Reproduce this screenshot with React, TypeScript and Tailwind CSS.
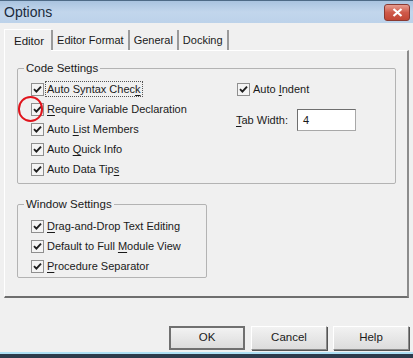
import React from "react";

const font = { fontFamily: '"Liberation Sans", Arial, sans-serif' };

const Check = () => (
  <span className="w-[13px] h-[13px] border border-[#8f8f8f] bg-[#f4f4f4] flex items-center justify-center shrink-0">
    <svg width="9" height="9" viewBox="0 0 9 9">
      <path d="M1 4.2 L3.4 6.6 L8 1.6" stroke="#1f1f1f" strokeWidth="1.9" fill="none" />
    </svg>
  </span>
);

type ItemProps = { children: React.ReactNode; focus?: boolean };

const Item = ({ children, focus }: ItemProps) => (
  <div className="flex items-center gap-[2px] h-[20px]">
    <Check />
    <span className={`px-[1px] leading-[14px] ${focus ? "outline outline-1 outline-dotted outline-[#555]" : ""}`}>{children}</span>
  </div>
);

const U = ({ children }: { children: React.ReactNode }) => <span className="underline underline-offset-2">{children}</span>;

export default function App() {
  return (
    <div style={font} className="w-[413px] h-[358px] bg-[#f0f0f0] flex flex-col overflow-hidden text-[11px] text-[#1a1a1a] relative">
      {/* title bar */}
      <div className="h-[23px] shrink-0 flex items-center justify-between pl-[4px] pr-[3px] bg-gradient-to-b from-[#a9c3df] via-[#c2d6ec] to-[#bcd2ea] border-t border-[#4e6a86]">
        <span className="text-[14px] text-[#1b2b3c]">Options</span>
        <div className="w-[26px] h-[17px] mt-[1px] rounded-[3px] border border-[#8a3a32] bg-gradient-to-b from-[#e69c90] via-[#cf5a4a] to-[#c24634] flex items-center justify-center">
          <svg width="11" height="9" viewBox="0 0 11 9">
            <path d="M1.5 1 L9.5 8 M9.5 1 L1.5 8" stroke="#fff" strokeWidth="2.2" />
          </svg>
        </div>
      </div>

      <div className="flex-1 min-h-0 flex flex-col px-[4px]">
        {/* tabs */}
        <div className="flex items-end h-[27px] shrink-0 text-[11.5px]">
          <div className="h-[22px] pl-[9px] pr-[7px] pt-[3px] bg-[#f0f0f0] border-t border-l border-white relative z-10 -mb-[1px]">Editor</div>
          <div className="h-[20px] px-[4px] pt-[2px] border-l-2 border-r-2 border-[#9a9a9a] text-[11px]">Editor Format</div>
          <div className="h-[20px] px-[4px] pt-[2px] border-r-2 border-[#9a9a9a] text-[11px]">General</div>
          <div className="h-[20px] px-[4px] pt-[2px] border-r-2 border-[#9a9a9a] text-[11px]">Docking</div>
        </div>

        {/* panel */}
        <div className="h-[248px] shrink-0 border-t border-l border-white border-r-2 border-b-2 border-r-[#8c8c8c] border-b-[#6e6e6e] pl-[12px] pr-[11px] pt-[10px] relative">
          <fieldset className="border border-[#b3b3b3] rounded-[2px] h-[123px] flex pl-[13px] pt-[4px]">
            <legend className="text-[11.5px] px-[2px] -ml-[7px] leading-[14px]">Code Settings</legend>
            <div className="w-[206px]">
              <Item focus>Auto Syntax Chec<U>k</U></Item>
              <Item><U>R</U>equire Variable Declaration</Item>
              <Item>Auto <U>L</U>ist Members</Item>
              <Item>Auto <U>Q</U>uick Info</Item>
              <Item>Auto Data Tip<U>s</U></Item>
            </div>
            <div className="flex flex-col">
              <Item>Auto <U>I</U>ndent</Item>
              <div className="flex items-center mt-[10px] -ml-[1px]">
                <span className="w-[61px]"><U>T</U>ab Width:</span>
                <div className="w-[59px] h-[22px] bg-white border border-[#a8a8a8] border-t-[#6f6f6f] border-l-[#6f6f6f] pl-[5px] flex items-center">4</div>
              </div>
            </div>
          </fieldset>

          <fieldset className="border border-[#b3b3b3] rounded-[2px] h-[81px] w-[190px] mt-[13px] pl-[13px] pt-[5px]">
            <legend className="text-[11.5px] px-[2px] -ml-[7px] leading-[14px]">Window Settings</legend>
            <Item><U>D</U>rag-and-Drop Text Editing</Item>
            <Item>Default to Full <U>M</U>odule View</Item>
            <Item><U>P</U>rocedure Separator</Item>
          </fieldset>

          {/* annotation */}
          <div className="absolute left-[13px] top-[45px] w-[25px] h-[26px] rounded-full border-2 border-[#e0141c]" />
        </div>

        {/* buttons */}
        <div className="flex justify-end gap-[6px] mt-auto mb-[2px] text-[11.5px]">
          <button className="w-[76px] h-[24px] border-2 border-[#707070] bg-gradient-to-b from-[#f2f2f2] to-[#dcdcdc]">OK</button>
          <button className="w-[76px] h-[24px] border border-[#8a8a8a] border-t-white border-l-white shadow-[1px_1px_0_#555] bg-gradient-to-b from-[#f2f2f2] to-[#dcdcdc]">Cancel</button>
          <button className="w-[76px] h-[24px] border border-[#8a8a8a] border-t-white border-l-white shadow-[1px_1px_0_#555] bg-gradient-to-b from-[#f2f2f2] to-[#dcdcdc]">Help</button>
        </div>
      </div>

      <div className="h-[2px] shrink-0 bg-[#aee0f4]" />
      <div className="h-[4px] shrink-0 bg-[#2c3b4c]" />
    </div>
  );
}
